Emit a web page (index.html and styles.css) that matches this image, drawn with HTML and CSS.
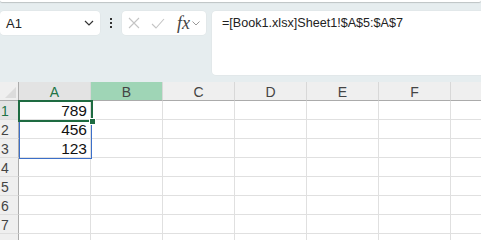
FILE: index.html
```html
<!DOCTYPE html>
<html>
<head>
<meta charset="utf-8">
<link rel="stylesheet" href="styles.css">
</head>
<body>
<div class="ribbon"></div>
<div class="toolbar">
  <div class="namebox">
    <span class="name">A1</span>
    <svg class="chev" width="10" height="6" viewBox="0 0 10 6"><path d="M1 1 L5 5 L9 1" fill="none" stroke="#333" stroke-width="1.2"/></svg>
  </div>
  <div class="dots"><span></span><span></span><span></span></div>
  <div class="fxbtns">
    <svg class="ico" width="12" height="12" viewBox="0 0 12 12"><path d="M1 1 L11 11 M11 1 L1 11" stroke="#c4c4c4" stroke-width="1.1" fill="none"/></svg>
    <svg class="ico" width="14" height="11" viewBox="0 0 14 11"><path d="M1 6 L5 10 L13 1" stroke="#c4c4c4" stroke-width="1.1" fill="none"/></svg>
    <span class="fx">fx</span>
    <svg class="chev2" width="8" height="5" viewBox="0 0 8 5"><path d="M0.5 0.5 L4 4 L7.5 0.5" fill="none" stroke="#999" stroke-width="1"/></svg>
  </div>
  <div class="formula">=[Book1.xlsx]Sheet1!$A$5:$A$7</div>
</div>
<div class="sheet">
  <div class="grid">
    <div class="corner"><span class="tri"></span></div>
    <div class="ch sel">A</div>
    <div class="ch hl">B</div>
    <div class="ch">C</div>
    <div class="ch">D</div>
    <div class="ch">E</div>
    <div class="ch">F</div>
    <div class="ch last"></div>

    <div class="rh sel">1</div><div class="c num">789</div><div class="c"></div><div class="c"></div><div class="c"></div><div class="c"></div><div class="c"></div><div class="c"></div>
    <div class="rh">2</div><div class="c num">456</div><div class="c"></div><div class="c"></div><div class="c"></div><div class="c"></div><div class="c"></div><div class="c"></div>
    <div class="rh">3</div><div class="c num">123</div><div class="c"></div><div class="c"></div><div class="c"></div><div class="c"></div><div class="c"></div><div class="c"></div>
    <div class="rh">4</div><div class="c"></div><div class="c"></div><div class="c"></div><div class="c"></div><div class="c"></div><div class="c"></div><div class="c"></div>
    <div class="rh">5</div><div class="c"></div><div class="c"></div><div class="c"></div><div class="c"></div><div class="c"></div><div class="c"></div><div class="c"></div>
    <div class="rh">6</div><div class="c"></div><div class="c"></div><div class="c"></div><div class="c"></div><div class="c"></div><div class="c"></div><div class="c"></div>
    <div class="rh">7</div><div class="c"></div><div class="c"></div><div class="c"></div><div class="c"></div><div class="c"></div><div class="c"></div><div class="c"></div>
    <div class="rh"></div><div class="c"></div><div class="c"></div><div class="c"></div><div class="c"></div><div class="c"></div><div class="c"></div><div class="c"></div>
  </div>
  <div class="refbox"></div>
  <div class="active"><span class="handle"></span></div>
</div>
</body>
</html>
```
FILE: styles.css
```css
html, body {
  margin: 0;
  padding: 0;
  width: 481px;
  height: 240px;
  overflow: hidden;
  background: #e6edef;
  font-family: "Liberation Sans", Arial, sans-serif;
}
.ribbon {
  height: 2px;
  background: #fff;
  border-radius: 0 0 6px 6px;
  box-shadow: 0 1px 1px rgba(0,0,0,0.18);
}
.toolbar {
  display: flex;
  align-items: flex-start;
  padding-top: 9px;
  height: 71px;
}
.namebox {
  width: 100px;
  height: 24px;
  box-sizing: border-box;
  background: #fff;
  border-radius: 4px;
  display: flex;
  align-items: center;
  justify-content: space-between;
  padding: 0 6px 0 6px;
  box-shadow: 0 0 0 0.5px #dde3e5;
}
.name {
  font-size: 13px;
  color: #222;
}
.dots {
  width: 22px;
  height: 24px;
  display: flex;
  flex-direction: column;
  align-items: center;
  justify-content: center;
  gap: 2px;
}
.dots span {
  width: 2px;
  height: 2px;
  background: #333;
}
.fxbtns {
  width: 84px;
  height: 24px;
  box-sizing: border-box;
  background: #fff;
  border-radius: 4px;
  display: flex;
  align-items: center;
  padding-left: 6px;
  box-shadow: 0 0 0 0.5px #dde3e5;
}
.fxbtns .ico:first-child { margin-right: 11px; }
.fxbtns .ico { margin-right: 12px; }
.fx {
  font-family: "Liberation Serif", "Times New Roman", serif;
  font-style: italic;
  font-size: 18px;
  color: #444;
  margin-right: 2px;
  line-height: 18px;
}
.formula {
  margin-left: 6px;
  flex: 1;
  height: 64px;
  box-sizing: border-box;
  background: #fff;
  border-radius: 4px 0 0 4px;
  padding: 5px 0 0 10px;
  font-size: 12.6px;
  color: #222;
  box-shadow: 0 0 0 0.5px #dde3e5;
}
.sheet {
  position: relative;
}
.grid {
  display: grid;
  grid-template-columns: 19px repeat(6, 72px) 40px;
  grid-auto-rows: 19px;
  background: #fff;
}
.corner, .ch, .rh {
  background: #efefef;
  color: #444;
  font-size: 14px;
  box-sizing: border-box;
}
.corner {
  border-right: 1px solid #ababab;
  border-bottom: 1px solid #ababab;
  position: relative;
}
.tri {
  position: absolute;
  right: 2px;
  bottom: 2px;
  width: 0;
  height: 0;
  border-left: 11px solid transparent;
  border-bottom: 11px solid #dcdcdc;
}
.ch {
  border-bottom: 1px solid #ababab;
  border-right: 1px solid #d8d8d8;
  display: flex;
  align-items: center;
  justify-content: center;
  padding-top: 1px;
}
.ch.sel { color: #217346; background: #e3e3e3; }
.ch.hl { background: #9fd5b6; }
.ch.last { border-right: none; }
.rh {
  border-right: 1px solid #ababab;
  border-bottom: 1px solid #dedede;
  display: flex;
  align-items: center;
  padding-left: 1px;
  padding-top: 1px;
}
.rh.sel { color: #217346; background: #e3e3e3; }
.c {
  box-sizing: border-box;
  border-right: 1px solid #e0e0e0;
  border-bottom: 1px solid #e0e0e0;
  font-size: 15.5px;
  color: #111;
}
.num {
  text-align: right;
  padding-right: 3px;
  line-height: 20px;
}
.refbox {
  position: absolute;
  left: 19px;
  top: 38px;
  width: 73px;
  height: 39px;
  box-sizing: border-box;
  border: 1px solid #3c6fc9;
}
.active {
  position: absolute;
  left: 18px;
  top: 18px;
  width: 75px;
  height: 22px;
  box-sizing: border-box;
  border: 2px solid #1e6b41;
}
.handle {
  position: absolute;
  right: -5px;
  bottom: -5px;
  width: 5px;
  height: 5px;
  background: #1e6b41;
  border: 1px solid #fff;
}
```
